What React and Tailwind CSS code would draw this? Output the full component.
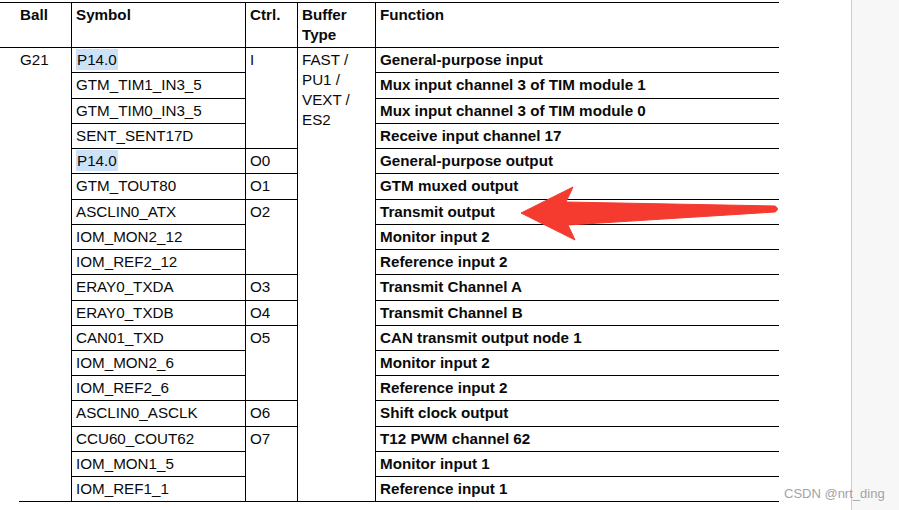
const ROWS = [
  { sym: 'P14.0', hl: true, fn: 'General-purpose input', h: 25 },
  { sym: 'GTM_TIM1_IN3_5', fn: 'Mux input channel 3 of TIM module 1', h: 26 },
  { sym: 'GTM_TIM0_IN3_5', fn: 'Mux input channel 3 of TIM module 0', h: 25 },
  { sym: 'SENT_SENT17D', fn: 'Receive input channel 17', h: 25 },
  { sym: 'P14.0', hl: true, fn: 'General-purpose output', h: 25 },
  { sym: 'GTM_TOUT80', fn: 'GTM muxed output', h: 26 },
  { sym: 'ASCLIN0_ATX', fn: 'Transmit output', h: 25 },
  { sym: 'IOM_MON2_12', fn: 'Monitor input 2', h: 25 },
  { sym: 'IOM_REF2_12', fn: 'Reference input 2', h: 25 },
  { sym: 'ERAY0_TXDA', fn: 'Transmit Channel A', h: 26 },
  { sym: 'ERAY0_TXDB', fn: 'Transmit Channel B', h: 25 },
  { sym: 'CAN01_TXD', fn: 'CAN transmit output node 1', h: 25 },
  { sym: 'IOM_MON2_6', fn: 'Monitor input 2', h: 25 },
  { sym: 'IOM_REF2_6', fn: 'Reference input 2', h: 25 },
  { sym: 'ASCLIN0_ASCLK', fn: 'Shift clock output', h: 26 },
  { sym: 'CCU60_COUT62', fn: 'T12 PWM channel 62', h: 25 },
  { sym: 'IOM_MON1_5', fn: 'Monitor input 1', h: 25 },
  { sym: 'IOM_REF1_1', fn: 'Reference input 1', h: 25 },
];

// ctrl groups: label, first row index (0-based), span
const CTRL = [
  { label: 'I', start: 0, span: 4 },
  { label: 'O0', start: 4, span: 1 },
  { label: 'O1', start: 5, span: 1 },
  { label: 'O2', start: 6, span: 3 },
  { label: 'O3', start: 9, span: 1 },
  { label: 'O4', start: 10, span: 1 },
  { label: 'O5', start: 11, span: 3 },
  { label: 'O6', start: 14, span: 1 },
  { label: 'O7', start: 15, span: 3 },
];

const ROW_START = [
  'row-start-2', 'row-start-3', 'row-start-4', 'row-start-5', 'row-start-6', 'row-start-7',
  'row-start-8', 'row-start-9', 'row-start-10', 'row-start-11', 'row-start-12', 'row-start-13',
  'row-start-14', 'row-start-15', 'row-start-16', 'row-start-17', 'row-start-18', 'row-start-19',
];

const ROW_SPAN = { 1: 'row-span-1', 3: 'row-span-3', 4: 'row-span-4' };

const cell = 'border-b border-black pt-[2px] leading-[20px]';

function Arrow() {
  return (
    <svg
      className="pointer-events-none absolute left-0 top-0"
      width="899"
      height="510"
      viewBox="0 0 899 510"
    >
      <path
        d="M521 213 L573 187 L566 202 L775 206 Q780 209 775 212 L568 225 L575 240 Z"
        fill="#f53a30"
        stroke="#f53a30"
        strokeWidth="1"
        strokeLinejoin="round"
      />
    </svg>
  );
}

export default function App() {
  return (
    <div className="relative flex h-[510px] w-[899px] overflow-hidden bg-white font-['Liberation_Sans',Arial,sans-serif] text-[15.2px] text-[#0a0a0a]">
      <div className="w-[851px] pt-[2px]">
        <div className="grid w-[779px] grid-cols-[72px_174px_52px_78px_403px] grid-rows-[45px_25px_26px_25px_25px_25px_26px_25px_25px_25px_26px_25px_25px_25px_25px_26px_25px_25px_25px] border-t border-black">
          {/* header */}
          <div className={`${cell} col-start-1 row-start-1 border-r pl-[20px] font-bold`}>Ball</div>
          <div className={`${cell} col-start-2 row-start-1 border-r pl-[4px] font-bold`}>Symbol</div>
          <div className={`${cell} col-start-3 row-start-1 border-r pl-[4px] font-bold`}>Ctrl.</div>
          <div className={`${cell} col-start-4 row-start-1 border-r pl-[4px] font-bold`}>
            Buffer
            <br />
            Type
          </div>
          <div className={`${cell} col-start-5 row-start-1 pl-[4px] font-bold`}>Function</div>

          {/* ball */}
          <div className="col-start-1 row-start-2 row-end-20 flex flex-col border-r border-black">
            <div className="flex-1 pl-[20px] pt-[2px] leading-[20px]">G21</div>
            <div className="ml-[19px] h-px bg-black" />
          </div>

          {/* symbol */}
          {ROWS.map((r, i) => (
            <div key={'s' + i} className={`${cell} ${ROW_START[i]} col-start-2 border-r pl-[4px]`}>
              {r.hl ? <span className="bg-[#cce2f8] px-[1px] py-[2px]">{r.sym}</span> : r.sym}
            </div>
          ))}

          {/* ctrl */}
          {CTRL.map((c) => (
            <div
              key={c.label}
              className={`${cell} ${ROW_START[c.start]} ${ROW_SPAN[c.span]} col-start-3 border-r pl-[4px]`}
            >
              {c.label}
            </div>
          ))}

          {/* buffer type */}
          <div className={`${cell} col-start-4 row-start-2 row-end-20 border-r pl-[4px]`}>
            FAST /
            <br />
            PU1 /
            <br />
            VEXT /
            <br />
            ES2
          </div>

          {/* function */}
          {ROWS.map((r, i) => (
            <div key={'f' + i} className={`${cell} ${ROW_START[i]} col-start-5 pl-[4px] font-bold`}>
              {r.fn}
            </div>
          ))}
        </div>
      </div>
      <div className="flex-1 border-l border-[#cfcfcf] bg-[#f7f7f7]" />

      <Arrow />

      <div className="absolute left-[784px] top-[486px] text-[13px] leading-[16px] text-[#a3a3a3]">
        CSDN @nrt_ding
      </div>
    </div>
  );
}
